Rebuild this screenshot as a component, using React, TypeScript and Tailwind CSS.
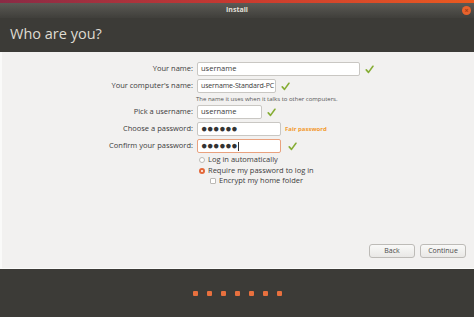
import React from "react";

function Check() {
  return (
    <svg width="9" height="9" viewBox="0 0 10 10" className="shrink-0">
      <path d="M1.4 5.4 L3.9 8.2 L8.8 1.4" fill="none" stroke="#86ad35" strokeWidth="1.8" strokeLinecap="round" strokeLinejoin="round" />
    </svg>
  );
}

function Row({ label, children }: { label: string; children: React.ReactNode }) {
  return (
    <div className="flex items-center h-[14px]">
      <div className="w-[192px] text-right text-[7.5px] text-[#3c3c3c] pr-[1px]">{label}</div>
      <div className="ml-[3px] flex items-center gap-[5px]">{children}</div>
    </div>
  );
}

function Field({ w, value, focus, cursor, dots, tight }: { w: string; value: string; focus?: boolean; cursor?: boolean; dots?: boolean; tight?: boolean }) {
  return (
    <div
      className={`${w} h-[14px] bg-white rounded-[2px] border flex items-center pl-[3px] overflow-hidden whitespace-nowrap text-[#3a3a3a] ${
        focus ? "border-[#e9a27f]" : "border-[#c9c7c3]"
      } ${dots ? "text-[10.5px] tracking-[-0.3px] text-[#333]" : tight ? "text-[7px] tracking-[-0.15px]" : "text-[7.5px]"}`}
    >
      {value}
      {cursor && <span className="w-px h-[9px] bg-[#333] ml-[1px]" />}
    </div>
  );
}

export default function App() {
  const dots = [0, 1, 2, 3, 4, 5, 6];
  return (
    <div className="w-[474px] h-[317px] flex flex-col overflow-hidden" style={{ fontFamily: '"Open Sans", "Noto Sans", sans-serif' }}>
      {/* top accent */}
      <div className="h-[3px] bg-linear-to-r from-[#8a2a45] via-[#c8392f] to-[#ea5a1f]" />

      {/* title bar */}
      <div className="h-[15px] bg-linear-to-b from-[#5b5a55] to-[#403f3b] relative flex items-center justify-center">
        <span className="text-[7px] font-bold text-[#e4e1da]">Install</span>
        <div className="absolute right-[3px] top-[3px] w-[9px] h-[9px] rounded-full bg-[#e8622c] flex items-center justify-center">
          <span className="text-[7px] leading-none text-[#a33a14] font-bold">×</span>
        </div>
      </div>

      {/* header */}
      <div className="h-[34px] bg-[#3c3b37] flex items-center pl-[10px] pb-[2px]">
        <span className="text-[14.5px] text-[#dfdbd2]">Who are you?</span>
      </div>

      {/* content */}
      <div className="flex-1 bg-[#f2f1f0] border-l-2 border-b border-l-[#fafaf9] border-b-[#fbfbfa] flex flex-col">
        <div className="pt-[10px] flex flex-col">
          <Row label="Your name:">
            <Field w="w-[163px]" value="username" />
            <Check />
          </Row>
          <div className="mt-[3px]">
            <Row label="Your computer's name:">
              <Field w="w-[79px]" value="username-Standard-PC" tight />
              <Check />
            </Row>
          </div>
          <div className="ml-[194px] mt-[1px] h-[10px] flex items-center text-[6px] text-[#555]">
            The name it uses when it talks to other computers.
          </div>
          <div className="mt-[1px]">
            <Row label="Pick a username:">
              <Field w="w-[65px]" value="username" />
              <Check />
            </Row>
          </div>
          <div className="mt-[3px]">
            <Row label="Choose a password:">
              <Field w="w-[84px]" value="●●●●●●" dots />
              <span className="text-[6px] font-bold text-[#f29a2e] -ml-[1px]">Fair password</span>
            </Row>
          </div>
          <div className="mt-[3px]">
            <Row label="Confirm your password:">
              <Field w="w-[84px]" value="●●●●●●" focus cursor dots />
              <div className="ml-[2px]"><Check /></div>
            </Row>
          </div>

          <div className="ml-[197px] mt-[2px] flex flex-col text-[7.5px] text-[#3c3c3c]">
            <div className="h-[10px] flex items-center gap-[3px]">
              <span className="w-[6px] h-[6px] rounded-full border border-[#bbb9b5] bg-white" />
              Log in automatically
            </div>
            <div className="h-[11px] flex items-center gap-[3px]">
              <span className="w-[6px] h-[6px] rounded-full bg-[#e3683a] flex items-center justify-center">
                <span className="w-[2px] h-[2px] rounded-full bg-white" />
              </span>
              Require my password to log in
            </div>
            <div className="h-[10px] flex items-center gap-[3px] ml-[11px]">
              <span className="w-[6px] h-[6px] rounded-[1px] border border-[#bbb9b5] bg-white" />
              Encrypt my home folder
            </div>
          </div>
        </div>

        <div className="flex-1" />
        <div className="flex justify-end gap-[5px] pr-[8px] pb-[10px]">
          <button className="w-[46px] h-[14px] rounded-[3px] border border-[#bdbbb7] bg-linear-to-b from-[#f9f9f8] to-[#e9e8e6] text-[7px] text-[#4a4a4a]">Back</button>
          <button className="w-[46px] h-[14px] rounded-[3px] border border-[#bdbbb7] bg-linear-to-b from-[#f9f9f8] to-[#e9e8e6] text-[7px] text-[#4a4a4a]">Continue</button>
        </div>
      </div>

      {/* footer progress dots */}
      <div className="h-[48px] bg-[#3c3b37] flex items-center justify-center gap-[9px]">
        {dots.map((d) => (
          <span key={d} className="w-[5px] h-[5px] rounded-[1px] bg-[#e8703e]" />
        ))}
      </div>
    </div>
  );
}
